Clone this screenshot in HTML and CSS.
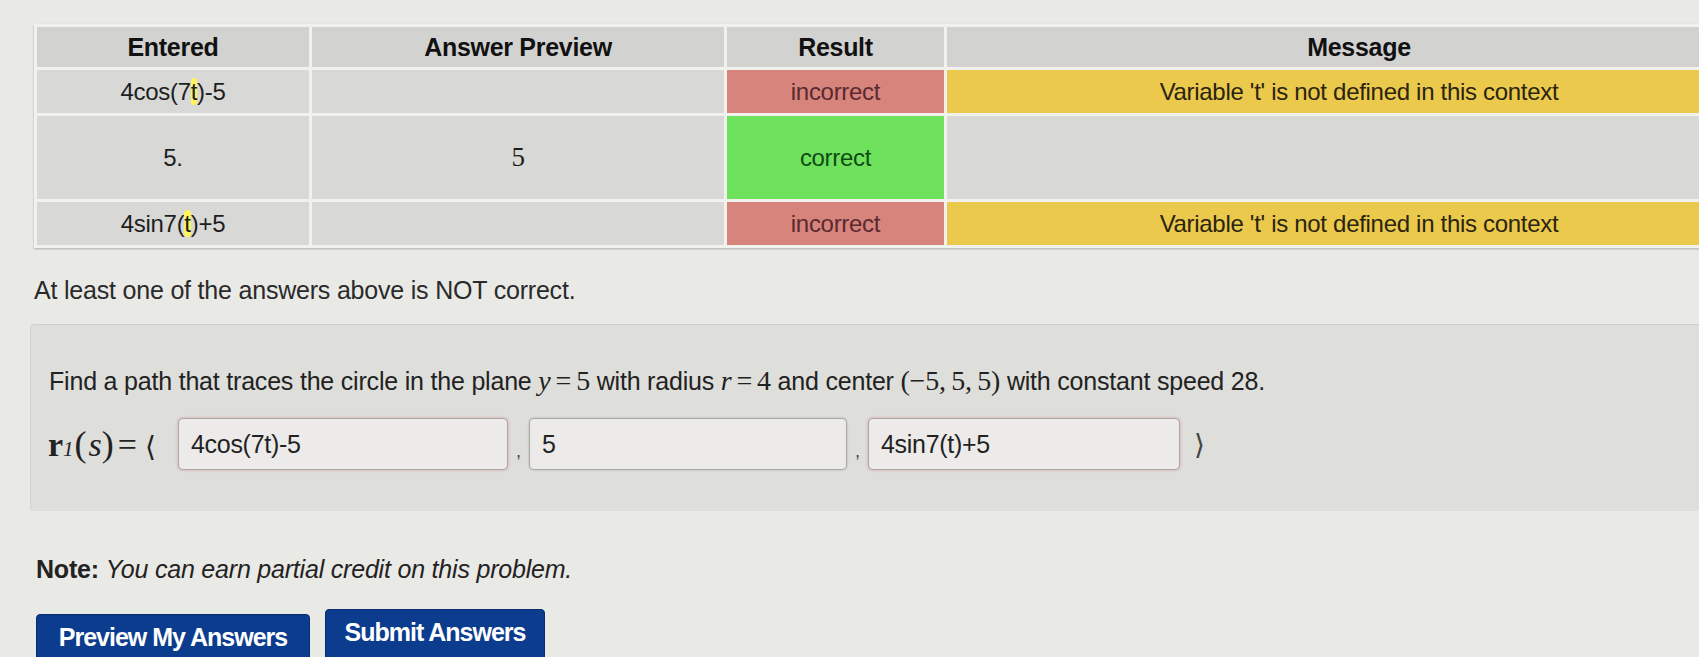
FILE: index.html
```html
<!DOCTYPE html>
<html lang="en">
<head>
    <meta charset="UTF-8">
    <title>Attempt Results</title>
    <link rel="stylesheet" href="styles.css">
</head>
<body>
    <div class="page">
        <table class="attempt-results">
            <tr class="head-row">
                <th class="col-entered">Entered</th>
                <th class="col-preview">Answer Preview</th>
                <th class="col-result">Result</th>
                <th class="col-message">Message</th>
            </tr>
            <tr class="row-short">
                <td>4cos(7<span class="hl">t</span>)-5</td>
                <td></td>
                <td class="incorrect">incorrect</td>
                <td class="warn">Variable 't' is not defined in this context</td>
            </tr>
            <tr class="row-tall">
                <td>5.</td>
                <td class="math-preview">5</td>
                <td class="correct">correct</td>
                <td></td>
            </tr>
            <tr class="row-short">
                <td>4sin7(<span class="hl">t</span>)+5</td>
                <td></td>
                <td class="incorrect">incorrect</td>
                <td class="warn">Variable 't' is not defined in this context</td>
            </tr>
        </table>

        <div class="summary">At least one of the answers above is NOT correct.</div>

        <div class="problem">
            <p class="problem-text">
                Find a path that traces the circle in the plane
                <span class="mi">y</span><span class="mo">=</span><span class="mn">5</span>
                with radius
                <span class="mi">r</span><span class="mo">=</span><span class="mn">4</span>
                and center <span class="mn">(&minus;5,&thinsp;5,&thinsp;5)</span> with constant speed 28.
            </p>
            <div class="answer-line">
                <span class="lhs"><b class="vec">r</b><i class="sub">1</i><span class="paren">(</span><i class="mi">s</i><span class="paren">)</span><span class="mo">=</span><span class="angle">&lang;</span></span>
                <input class="ans ans-1" type="text" value="4cos(7t)-5">
                <span class="comma">,</span>
                <input class="ans ans-2" type="text" value="5">
                <span class="comma">,</span>
                <input class="ans ans-3" type="text" value="4sin7(t)+5">
                <span class="angle close">&rang;</span>
            </div>
        </div>

        <p class="note"><b>Note:</b> <i>You can earn partial credit on this problem.</i></p>

        <div class="buttons">
            <button class="btn btn-preview">Preview My Answers</button>
            <button class="btn btn-submit">Submit Answers</button>
        </div>
    </div>
</body>
</html>
```

FILE: styles.css
```css
html, body {
    margin: 0;
    height: 100%;
    overflow: hidden;
}

body {
    background-color: #e9e9e6;
    font-family: "Liberation Sans", Arial, sans-serif;
    color: #1e1e1e;
}

.page {
    padding: 24px 0 0 34px;
    width: 1760px;
}

.attempt-results {
    border-collapse: separate;
    border-spacing: 3px;
    background-color: #f1f1ee;
    width: 1740px;
    font-size: 24px;
    letter-spacing: -0.3px;
    box-shadow: 0 1px 2px rgba(0, 0, 0, 0.25);
}

.attempt-results th,
.attempt-results td {
    background-color: #d8d8d6;
    text-align: center;
    padding: 0 6px;
}

.attempt-results th {
    background-color: #d2d2d0;
    font-weight: bold;
    font-size: 25px;
    height: 40px;
    color: #111;
}

.col-entered { width: 260px; }
.col-preview { width: 400px; }
.col-result { width: 205px; }

.row-short td {
    height: 43px;
}

.row-tall td {
    height: 83px;
}

.incorrect {
    color: #5a2a30;
}

.attempt-results td.incorrect {
    background-color: #d6847c;
}

.attempt-results td.correct {
    background-color: #6ee25c;
    color: #0f4a14;
}

.attempt-results td.warn {
    background-color: #ebc94c;
    color: #2a2410;
}

.hl {
    background-color: #fff45a;
    border-radius: 8px;
}

.math-preview {
    font-family: "Liberation Serif", "Times New Roman", serif;
    font-size: 27px;
}

.summary {
    margin: 28px 0 0 0;
    font-size: 25px;
    letter-spacing: -0.2px;
    color: #2a2a2a;
}

.problem {
    margin-top: 19px;
    margin-left: -4px;
    background-color: #dededb;
    border-top: 1px solid #d0d0ce;
    border-left: 1px solid #d4d4d2;
    border-radius: 4px 0 0 4px;
    height: 186px;
    padding: 0 0 0 18px;
}

.problem-text {
    margin: 0;
    padding-top: 40px;
    font-size: 25px;
    letter-spacing: -0.2px;
    color: #222;
}

.mi {
    font-family: "Liberation Serif", "Times New Roman", serif;
    font-style: italic;
    font-size: 28px;
}

.mn {
    font-family: "Liberation Serif", "Times New Roman", serif;
    font-size: 28px;
}

.mo {
    font-family: "Liberation Serif", "Times New Roman", serif;
    font-size: 28px;
    margin: 0 5px;
}

.answer-line {
    display: flex;
    align-items: center;
    margin-top: 20px;
    height: 54px;
}

.lhs {
    display: flex;
    align-items: baseline;
    font-family: "Liberation Serif", "Times New Roman", serif;
    font-size: 34px;
    color: #222;
    width: 130px;
    margin-left: -1px;
}

.lhs .mi {
    font-size: 34px;
    margin-left: 2px;
}

.lhs .mo {
    font-size: 34px;
    margin: 0 6px 0 4px;
}

.vec {
    font-weight: bold;
}

.sub {
    font-size: 21px;
    margin-right: 1px;
}

.paren {
    font-size: 36px;
}

.angle {
    font-family: "DejaVu Serif", serif;
    font-size: 28px;
    margin-left: 2px;
}

.ans {
    box-sizing: border-box;
    height: 52px;
    border: 1px solid #a9a9a7;
    border-radius: 5px;
    background-color: #ecebe9;
    font-family: "Liberation Sans", Arial, sans-serif;
    font-size: 25px;
    letter-spacing: -0.3px;
    color: #222;
    padding: 0 12px;
    box-shadow: 0 0 3px rgba(205, 80, 80, 0.45);
}

.ans-1 { width: 330px; }
.ans-2 { width: 318px; box-shadow: 0 0 2px rgba(0, 0, 0, 0.25); }
.ans-3 { width: 312px; }

.comma {
    width: 21px;
    text-align: center;
    font-size: 18px;
    color: #444;
    padding-top: 14px;
}

.angle.close {
    margin-left: 14px;
    color: #444;
}

.note {
    margin: 44px 0 0 2px;
    font-size: 25px;
    letter-spacing: -0.2px;
    color: #222;
}

.buttons {
    display: flex;
    align-items: flex-start;
    gap: 15px;
    margin-top: 25px;
    margin-left: 2px;
}

.btn {
    background-color: #0c3c8e;
    color: #fff;
    border: 1px solid #082d6e;
    border-radius: 4px;
    font-family: "Liberation Sans", Arial, sans-serif;
    font-weight: bold;
    font-size: 25px;
    line-height: 25px;
    letter-spacing: -1px;
    white-space: nowrap;
    padding: 10px 18px 22px;
}

.btn-preview {
    width: 274px;
    margin-top: 5px;
}

.btn-submit {
    width: 220px;
}
```
